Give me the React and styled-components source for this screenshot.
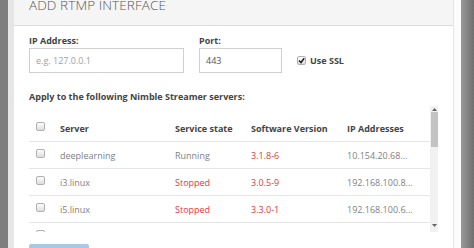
import React from "react";
import styled, { createGlobalStyle } from "styled-components";

const Global = createGlobalStyle`
  html, body { margin: 0; padding: 0; overflow: hidden; background: #fff; }
  * { box-sizing: border-box; }
  body { font-family: "Open Sans", "Liberation Sans", sans-serif; }
`;

const Page = styled.div`
  display: flex;
  width: 474px;
  height: 248px;
  overflow: hidden;
`;

const LeftEdge = styled.div`
  width: 14px;
  flex: none;
  display: flex;
`;

const EdgeBand = styled.div`
  width: ${(p) => p.$w}px;
  background: ${(p) => p.$bg};
  flex: none;
`;

const RightEdge = styled.div`
  width: 20px;
  flex: none;
  display: flex;
`;

const Modal = styled.div`
  flex: 1;
  background: #fff;
  border-right: 1px solid #e6e6e6;
  display: flex;
  flex-direction: column;
  min-width: 0;
`;

const Header = styled.div`
  height: 26px;
  flex: none;
  background: #f5f5f5;
  border-bottom: 1px solid #dcdcdc;
  padding: 0 15px;
  overflow: hidden;
`;

const Title = styled.h1`
  margin: -2px 0 0;
  font-size: 13.5px;
  line-height: 14px;
  font-weight: 300;
  color: #555;
  letter-spacing: 0.1px;
`;

const Body = styled.div`
  padding: 9px 15px 0;
  display: flex;
  flex-direction: column;
`;

const FormRow = styled.div`
  display: flex;
  align-items: flex-end;
  gap: 15px;
`;

const Field = styled.div`
  display: flex;
  flex-direction: column;
  width: ${(p) => p.$w}px;
`;

const Label = styled.label`
  font-size: 9px;
  line-height: 12px;
  margin-bottom: 1px;
  font-weight: 700;
  color: #444;
`;

const Input = styled.div`
  height: 25px;
  border: 1px solid #cfcfcf;
  padding: 0 6px;
  display: flex;
  align-items: center;
  font-size: 9px;
  color: ${(p) => (p.$placeholder ? "#a0a0a0" : "#555")};
`;

const CheckLabel = styled.div`
  display: flex;
  align-items: center;
  gap: 4px;
  height: 25px;
  font-size: 9px;
  font-weight: 700;
  color: #444;
`;

const Box = styled.span`
  width: 9px;
  height: 9px;
  border: 1px solid #b0b0b0;
  border-radius: 2px;
  background: linear-gradient(#fdfdfd, #dedede);
  display: inline-flex;
  align-items: center;
  justify-content: center;
  flex: none;
`;

const Section = styled.div`
  margin-top: 18px;
  font-size: 9px;
  line-height: 12px;
  font-weight: 700;
  color: #444;
`;

const TableWrap = styled.div`
  margin-top: 3px;
  height: 126px;
  display: flex;
  overflow: hidden;
`;

const Table = styled.div`
  flex: 1;
  padding-top: 9px;
  display: flex;
  flex-direction: column;
`;

const Row = styled.div`
  display: grid;
  grid-template-columns: 31px 115px 76px 96px 1fr;
  height: 27px;
  flex: none;
  align-items: center;
  border-bottom: 1px solid #e6e6e6;
  font-size: 9px;
  font-weight: ${(p) => (p.$head ? 700 : 400)};
  color: ${(p) => (p.$head ? "#444" : "#808080")};
`;

const CheckCell = styled.div`
  padding-left: 7px;
  display: flex;
  align-items: center;
  margin-top: -4px;
`;

const Cell = styled.div`
  white-space: nowrap;
  overflow: hidden;
  color: ${(p) => (p.$red ? "#e0393e" : "inherit")};
`;

const Scrollbar = styled.div`
  width: 8px;
  flex: none;
  background: #f1f1f1;
  display: flex;
  flex-direction: column;
  align-items: center;
`;

const Arrow = styled.div`
  height: 6px;
  display: flex;
  align-items: center;
  justify-content: center;
  flex: none;
`;

const Thumb = styled.div`
  width: 7px;
  height: 35px;
  background: #c3c3c3;
  flex: none;
`;

const Track = styled.div`
  flex: ${(p) => (p.$h ? "none" : "1")};
  height: ${(p) => (p.$h ? `${p.$h}px` : "auto")};
`;

const Footer = styled.div`
  margin-top: 12px;
  display: flex;
`;

const Button = styled.div`
  width: 60px;
  height: 10px;
  background: #a9c7e6;
  border-radius: 2px 2px 0 0;
`;

const rows = [
  { name: "deeplearning", state: "Running", stopped: false, ver: "3.1.8-6", ip: "10.154.20.68..." },
  { name: "i3.linux", state: "Stopped", stopped: true, ver: "3.0.5-9", ip: "192.168.100.8..." },
  { name: "i5.linux", state: "Stopped", stopped: true, ver: "3.3.0-1", ip: "192.168.100.6..." },
  { name: "", state: "", stopped: false, ver: "", ip: "" },
];

const Tri = ({ up }) => (
  <svg width="5" height="3" viewBox="0 0 5 3">
    <path d={up ? "M0 3 L2.5 0 L5 3 Z" : "M0 0 L2.5 3 L5 0 Z"} fill="#666" />
  </svg>
);

export default function App() {
  return (
    <Page>
      <Global />
      <LeftEdge>
        <EdgeBand $w={8} $bg="#7e7e7e" />
        <EdgeBand $w={6} $bg="#e6e6e6" />
      </LeftEdge>
      <Modal>
        <Header>
          <Title>ADD RTMP INTERFACE</Title>
        </Header>
        <Body>
          <FormRow>
            <Field $w={155}>
              <Label>IP Address:</Label>
              <Input $placeholder>e.g. 127.0.0.1</Input>
            </Field>
            <Field $w={83}>
              <Label>Port:</Label>
              <Input>443</Input>
            </Field>
            <CheckLabel>
              <Box>
                <svg width="7" height="7" viewBox="0 0 7 7">
                  <path d="M1 3.5 L3 5.5 L6.2 1.2" stroke="#222" strokeWidth="1.5" fill="none" />
                </svg>
              </Box>
              Use SSL
            </CheckLabel>
          </FormRow>
          <Section>Apply to the following Nimble Streamer servers:</Section>
          <TableWrap>
            <Table>
              <Row $head>
                <CheckCell>
                  <Box />
                </CheckCell>
                <Cell>Server</Cell>
                <Cell>Service state</Cell>
                <Cell>Software Version</Cell>
                <Cell>IP Addresses</Cell>
              </Row>
              {rows.map((r, i) => (
                <Row key={i}>
                  <CheckCell>
                    <Box />
                  </CheckCell>
                  <Cell>{r.name}</Cell>
                  <Cell $red={r.stopped}>{r.state}</Cell>
                  <Cell $red>{r.ver}</Cell>
                  <Cell>{r.ip}</Cell>
                </Row>
              ))}
            </Table>
            <Scrollbar>
              <Arrow><Tri up /></Arrow>
              <Thumb />
              <Track />
              <Arrow><Tri /></Arrow>
              <Track $h={4} />
            </Scrollbar>
          </TableWrap>
          <Footer>
            <Button />
          </Footer>
        </Body>
      </Modal>
      <RightEdge>
        <EdgeBand $w={7} $bg="#fbfbfb" />
        <EdgeBand $w={13} $bg="linear-gradient(90deg, #9a9a9a, #6e6e6e)" />
      </RightEdge>
    </Page>
  );
}
